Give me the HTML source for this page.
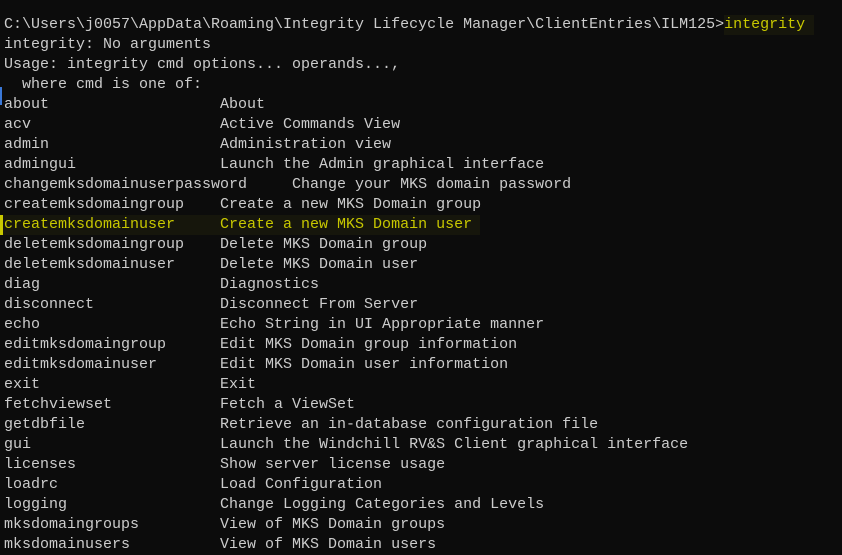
<!DOCTYPE html>
<html><head><meta charset="utf-8"><style>
html,body{margin:0;padding:0;background:#0c0c0c;width:842px;height:554px;overflow:hidden}
.t{position:absolute;left:4px;top:15px;font-family:"Liberation Mono","DejaVu Sans Mono",monospace;font-size:15px;line-height:20px;color:#cccccc;white-space:pre}
.l{height:20px}
.y{color:#c8c800}
.hl{position:absolute;left:0;top:215px;width:480px;height:20px;background:#16160c}
.bar{position:absolute;left:0;top:215px;width:3px;height:20px;background:#c8c800}
.hc{position:absolute;left:724px;top:15px;width:90px;height:20px;background:#16160c}
.tick{position:absolute;left:0;top:87px;width:2px;height:18px;background:#3a78d8}
</style></head><body>
<div class="hl"></div><div class="hc"></div><div class="bar"></div><div class="tick"></div>
<div class="t"><div class="l">C:\Users\j0057\AppData\Roaming\Integrity Lifecycle Manager\ClientEntries\ILM125&gt;<span class="y">integrity</span></div><div class="l">integrity: No arguments</div><div class="l">Usage: integrity cmd options... operands...,</div><div class="l">  where cmd is one of:</div><div class="l">about                   About</div><div class="l">acv                     Active Commands View</div><div class="l">admin                   Administration view</div><div class="l">admingui                Launch the Admin graphical interface</div><div class="l">changemksdomainuserpassword     Change your MKS domain password</div><div class="l">createmksdomaingroup    Create a new MKS Domain group</div><div class="l y">createmksdomainuser     Create a new MKS Domain user</div><div class="l">deletemksdomaingroup    Delete MKS Domain group</div><div class="l">deletemksdomainuser     Delete MKS Domain user</div><div class="l">diag                    Diagnostics</div><div class="l">disconnect              Disconnect From Server</div><div class="l">echo                    Echo String in UI Appropriate manner</div><div class="l">editmksdomaingroup      Edit MKS Domain group information</div><div class="l">editmksdomainuser       Edit MKS Domain user information</div><div class="l">exit                    Exit</div><div class="l">fetchviewset            Fetch a ViewSet</div><div class="l">getdbfile               Retrieve an in-database configuration file</div><div class="l">gui                     Launch the Windchill RV&amp;S Client graphical interface</div><div class="l">licenses                Show server license usage</div><div class="l">loadrc                  Load Configuration</div><div class="l">logging                 Change Logging Categories and Levels</div><div class="l">mksdomaingroups         View of MKS Domain groups</div><div class="l">mksdomainusers          View of MKS Domain users</div></div>
</body></html>
